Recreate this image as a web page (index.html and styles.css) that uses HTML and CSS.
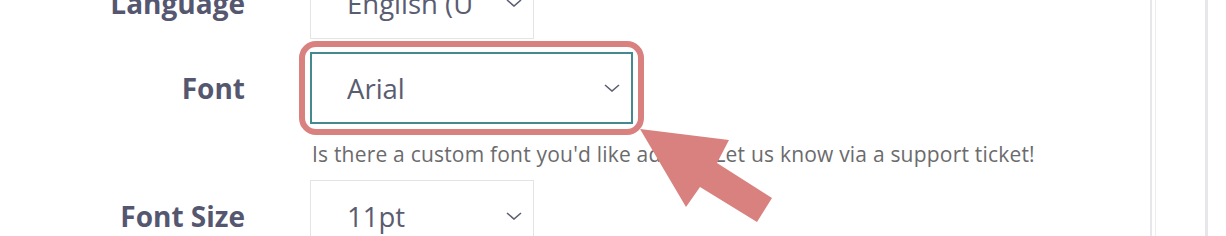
FILE: index.html
```html
<!DOCTYPE html>
<html lang="en">
<head>
  <meta charset="UTF-8">
  <title>Document settings</title>
  <link rel="stylesheet" href="styles.css">
</head>
<body>
  <div class="page">
    <main class="settings">
      <div class="field">
        <label class="field-label">Language</label>
        <div class="field-control">
          <div class="select select-narrow">
            <span class="select-value">English (UK)</span>
            <svg class="chevron" viewBox="0 0 16 8"><path d="M1 1 L8 7 L15 1"/></svg>
          </div>
        </div>
      </div>
      <div class="field">
        <label class="field-label">Font</label>
        <div class="field-control">
          <div class="highlight">
            <div class="select select-wide is-focused">
              <span class="select-value">Arial</span>
              <svg class="chevron" viewBox="0 0 16 8"><path d="M1 1 L8 7 L15 1"/></svg>
            </div>
          </div>
          <p class="hint">Is there a custom font you'd like added? Let us know via a support ticket!</p>
        </div>
      </div>
      <div class="field">
        <label class="field-label">Font Size</label>
        <div class="field-control">
          <div class="select select-narrow">
            <span class="select-value">11pt</span>
            <svg class="chevron" viewBox="0 0 16 8"><path d="M1 1 L8 7 L15 1"/></svg>
          </div>
        </div>
      </div>
    </main>
    <aside class="sidebar"></aside>
    <svg class="arrow" viewBox="0 0 1226 236">
      <polygon points="640,129 729,140 717,163 772,198 757,222 700,187 686,207"/>
    </svg>
  </div>
</body>
</html>
```

FILE: styles.css
```css
body { margin: 0; background: #fff; font-family: "Open Sans", "Liberation Sans", sans-serif; overflow: hidden; }
.page { position: relative; display: flex; width: 1226px; height: 236px; overflow: hidden; }

.settings { width: 1150px; border-right: 2px solid #e6e6eb; margin-top: -33px; }
.sidebar { width: 49px; margin-left: 3px; border-left: 1px solid #ededf1; border-right: 3px solid #e6e6eb; }

.field { display: grid; grid-template-columns: 245px 1fr; column-gap: 65px; margin-bottom: 13px; }
.field-label { text-align: right; font-size: 28px; font-weight: 700; line-height: 72px; color: #555770; }
.field-control { display: flex; flex-direction: column; align-items: flex-start; }

.select {
  box-sizing: border-box; height: 72px; display: flex; align-items: center;
  padding: 0 11px 0 36px; border: 1px solid #e4e4e6; background: #fff; color: #5a5c71;
}
.select-narrow { width: 224px; }
.select-wide { width: 323px; }
.select.is-focused { border: 2px solid #45888e; padding-left: 35px; }
.select-value { flex: 1; font-size: 27.5px; font-weight: 500; white-space: nowrap; overflow: hidden; margin-right: 32px; }
.chevron { width: 16px; height: 8px; fill: none; stroke: #5d5f73; stroke-width: 1.6; }

.highlight { position: relative; }
.highlight::after {
  content: ""; position: absolute; inset: -11px; border: 6px solid #d9817f; border-radius: 17px;
}

.hint { margin: 17px 0 0 2px; font-size: 21px; letter-spacing: 0.2px; line-height: 26px; color: #6b6b6d; }

.arrow { position: absolute; top: 0; left: 0; width: 1226px; height: 236px; fill: #d9817f; pointer-events: none; }
```
